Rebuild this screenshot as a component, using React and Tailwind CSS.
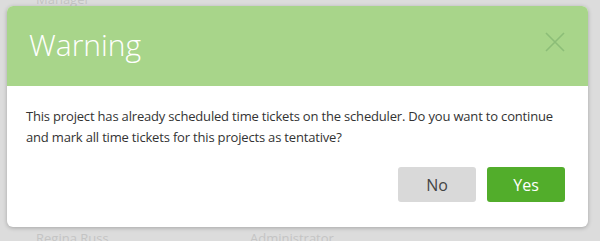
const App = () => {
  return (
    <div
      className="relative w-[600px] h-[241px] overflow-hidden bg-[#dcdcdc] pt-[6px] pl-[7px]"
      style={{ fontFamily: '"Open Sans", "Noto Sans", sans-serif' }}
    >
      {/* page behind the overlay */}
      <div className="absolute left-[36px] top-[-10px] text-[13px] text-[#c4c4c4]">
        Manager
      </div>
      <div className="absolute left-[36px] top-[229px] text-[13px] text-[#c4c4c4]">
        Regina Russ
      </div>
      <div className="absolute left-[250px] top-[229px] text-[13px] text-[#c4c4c4]">
        Administrator
      </div>

      {/* Modal */}
      <div className="relative w-[581px] h-[221px] rounded-[6px] bg-white overflow-hidden shadow-[0_1px_4px_rgba(0,0,0,0.25)]">
        <div className="h-[80px] bg-[#a8d58a] flex items-center justify-between pl-[22px] pr-[23px]">
          <h2 className="text-[30px] font-light text-white leading-none pb-[2px]">
            Warning
          </h2>
          <button className="w-[20px] h-[20px] text-[#8cbd78] mb-[8px]" aria-label="Close">
            <svg viewBox="0 0 20 20" className="w-full h-full" fill="none" stroke="currentColor" strokeWidth="1.6">
              <path d="M1 1L19 19M19 1L1 19" />
            </svg>
          </button>
        </div>

        <div className="px-[19px] pt-[20px]">
          <p className="text-[13px] leading-[21px] tracking-[-0.18px] text-[#333]">
            This project has already scheduled time tickets on the scheduler. Do you want to continue
            and mark all time tickets for this projects as tentative?
          </p>
        </div>

        <div className="flex justify-end gap-[11px] pr-[23px] mt-[19px]">
          <button className="w-[78px] h-[35px] rounded-[3px] bg-[#d9d9d9] text-[16px] text-[#444]">
            No
          </button>
          <button className="w-[78px] h-[35px] rounded-[3px] bg-[#52ad2b] text-[16px] text-white">
            Yes
          </button>
        </div>
      </div>
    </div>
  );
};

export default App;
